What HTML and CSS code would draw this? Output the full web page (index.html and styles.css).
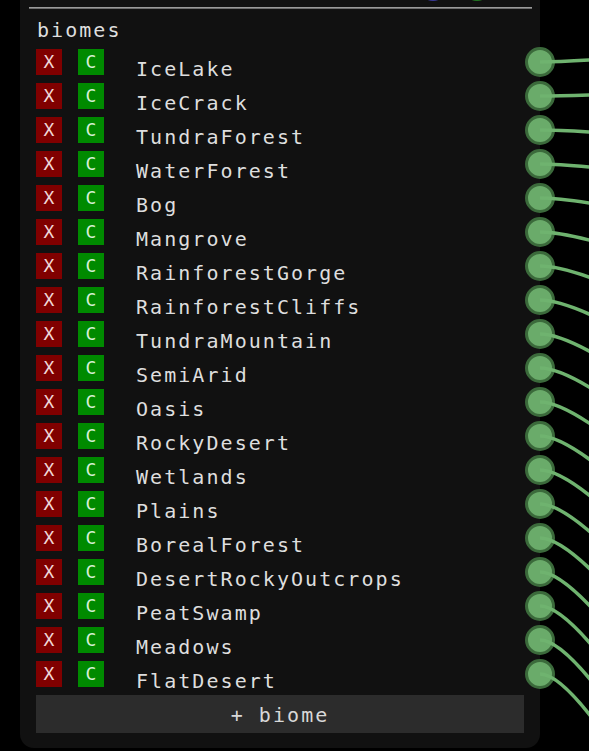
FILE: index.html
```html
<!DOCTYPE html>
<html>
<head>
<meta charset="utf-8">
<link rel="stylesheet" href="styles.css">
</head>
<body>
<div class="panel">
  <div class="sep"></div>
  <div class="title">biomes</div>
  <div class="rows">
    <div class="row"><span class="btn del">X</span><span class="btn copy">C</span><span class="label">IceLake</span></div>
    <div class="row"><span class="btn del">X</span><span class="btn copy">C</span><span class="label">IceCrack</span></div>
    <div class="row"><span class="btn del">X</span><span class="btn copy">C</span><span class="label">TundraForest</span></div>
    <div class="row"><span class="btn del">X</span><span class="btn copy">C</span><span class="label">WaterForest</span></div>
    <div class="row"><span class="btn del">X</span><span class="btn copy">C</span><span class="label">Bog</span></div>
    <div class="row"><span class="btn del">X</span><span class="btn copy">C</span><span class="label">Mangrove</span></div>
    <div class="row"><span class="btn del">X</span><span class="btn copy">C</span><span class="label">RainforestGorge</span></div>
    <div class="row"><span class="btn del">X</span><span class="btn copy">C</span><span class="label">RainforestCliffs</span></div>
    <div class="row"><span class="btn del">X</span><span class="btn copy">C</span><span class="label">TundraMountain</span></div>
    <div class="row"><span class="btn del">X</span><span class="btn copy">C</span><span class="label">SemiArid</span></div>
    <div class="row"><span class="btn del">X</span><span class="btn copy">C</span><span class="label">Oasis</span></div>
    <div class="row"><span class="btn del">X</span><span class="btn copy">C</span><span class="label">RockyDesert</span></div>
    <div class="row"><span class="btn del">X</span><span class="btn copy">C</span><span class="label">Wetlands</span></div>
    <div class="row"><span class="btn del">X</span><span class="btn copy">C</span><span class="label">Plains</span></div>
    <div class="row"><span class="btn del">X</span><span class="btn copy">C</span><span class="label">BorealForest</span></div>
    <div class="row"><span class="btn del">X</span><span class="btn copy">C</span><span class="label">DesertRockyOutcrops</span></div>
    <div class="row"><span class="btn del">X</span><span class="btn copy">C</span><span class="label">PeatSwamp</span></div>
    <div class="row"><span class="btn del">X</span><span class="btn copy">C</span><span class="label">Meadows</span></div>
    <div class="row"><span class="btn del">X</span><span class="btn copy">C</span><span class="label">FlatDesert</span></div>
  </div>
  <div class="add">+ biome</div>
</div>
<svg class="links" width="589" height="751" viewBox="0 0 589 751">
  <circle class="top-pin blue" cx="433" cy="-13" r="14"/>
  <circle class="top-pin green" cx="477" cy="-13" r="14"/>
  <g class="pins">
    <circle cx="540" cy="62" r="13.5"/>
    <circle cx="540" cy="96" r="13.5"/>
    <circle cx="540" cy="130" r="13.5"/>
    <circle cx="540" cy="164" r="13.5"/>
    <circle cx="540" cy="198" r="13.5"/>
    <circle cx="540" cy="232" r="13.5"/>
    <circle cx="540" cy="266" r="13.5"/>
    <circle cx="540" cy="300" r="13.5"/>
    <circle cx="540" cy="334" r="13.5"/>
    <circle cx="540" cy="368" r="13.5"/>
    <circle cx="540" cy="402" r="13.5"/>
    <circle cx="540" cy="436" r="13.5"/>
    <circle cx="540" cy="470" r="13.5"/>
    <circle cx="540" cy="504" r="13.5"/>
    <circle cx="540" cy="538" r="13.5"/>
    <circle cx="540" cy="572" r="13.5"/>
    <circle cx="540" cy="606" r="13.5"/>
    <circle cx="540" cy="640" r="13.5"/>
    <circle cx="540" cy="674" r="13.5"/>
  </g>
  <g class="wires">
    <path d="M540 62 Q560 62 600 59.3"/>
    <path d="M540 96 Q560 96 600 94.6"/>
    <path d="M540 130 Q560 130 600 132.7"/>
    <path d="M540 164 Q560 164 600 168.1"/>
    <path d="M540 198 Q560 198 600 204.8"/>
    <path d="M540 232 Q560 232 600 242.9"/>
    <path d="M540 266 Q560 266 600 281"/>
    <path d="M540 300 Q560 300 600 319"/>
    <path d="M540 334 Q560 334 600 357.1"/>
    <path d="M540 368 Q560 368 600 393.8"/>
    <path d="M540 402 Q560 402 600 430.6"/>
    <path d="M540 436 Q560 436 600 467.3"/>
    <path d="M540 470 Q560 470 600 504"/>
    <path d="M540 504 Q560 504 600 540.7"/>
    <path d="M540 538 Q560 538 600 578.8"/>
    <path d="M540 572 Q560 572 600 616.9"/>
    <path d="M540 606 Q560 606 600 655"/>
    <path d="M540 640 Q560 640 600 691.7"/>
    <path d="M540 674 Q560 674 600 728.4"/>
  </g>
</svg>
</body>
</html>
```
FILE: styles.css
```css
html, body {
  margin: 0;
  padding: 0;
  background: #000;
  width: 589px;
  height: 751px;
  overflow: hidden;
  position: relative;
  font-family: "DejaVu Sans Mono", "Liberation Mono", monospace;
  font-size: 20px;
  color: #dedede;
}

.panel {
  margin: -20px 0 0 20px;
  width: 520px;
  box-sizing: border-box;
  padding: 27px 16px 15px;
  background: #111111;
  border-radius: 14px;
}

.sep {
  height: 2px;
  margin: 0 -8px 0 -7px;
  background: linear-gradient(#9a9a9a 0 50%, #6c6c6c 50% 100%);
}

.title {
  margin: 8px 0 6px 1px;
  line-height: 26px;
  letter-spacing: 2.05px;
}

.rows {
  display: flex;
  flex-direction: column;
}

.row {
  display: flex;
  align-items: flex-start;
  height: 34px;
}

.btn {
  width: 26px;
  height: 26px;
  line-height: 26px;
  text-align: center;
  font-size: 18px;
}

.del {
  background: #800000;
  color: #f0d6d6;
}

.copy {
  margin-left: 16px;
  background: #008a00;
  color: #d6f0d6;
}

.label {
  margin: 7px 0 0 32px;
  line-height: 26px;
  letter-spacing: 2.05px;
}

.add {
  height: 38px;
  line-height: 40px;
  background: #2c2c2c;
  text-align: center;
  letter-spacing: 2.05px;
  color: #d8d8d8;
}

.links {
  position: absolute;
  left: 0;
  top: 0;
  pointer-events: none;
}

.top-pin.blue {
  fill: #3a3a96;
}

.top-pin.green {
  fill: #237a23;
}

.pins circle {
  fill: #6aab6a;
  stroke: #3b6a3b;
  stroke-width: 3;
}

.wires path {
  fill: none;
  stroke: #6fb36f;
  stroke-width: 3.5;
  stroke-linecap: butt;
}
```
